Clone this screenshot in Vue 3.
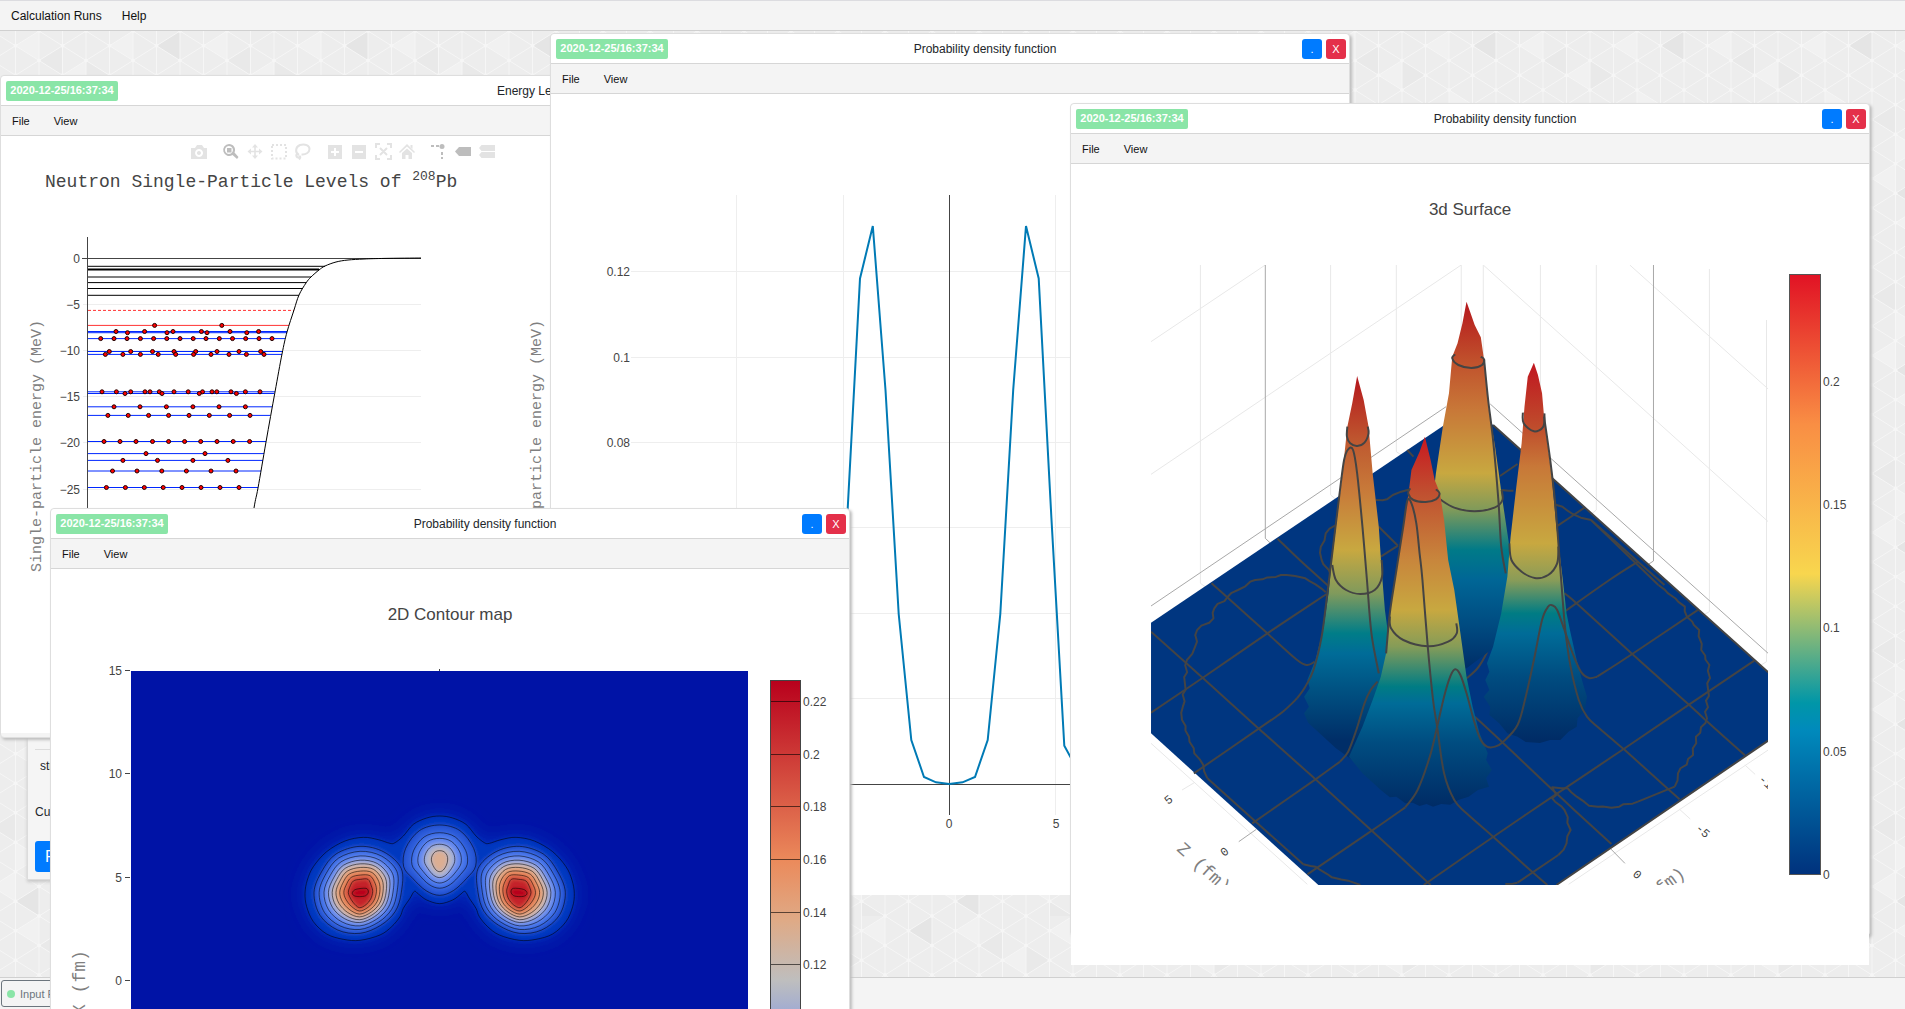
<script setup>
const stamp = '2020-12-25/16:37:34'

const windows = [
  { id: 'levels', title: 'Energy Levels', left: 0, top: 75, width: 1000, height: 663 },
  { id: 'line', title: 'Probability density function', left: 550, top: 33, width: 800, height: 833 },
  { id: 'contour', title: 'Probability density function', left: 50, top: 508, width: 800, height: 833 },
  { id: 'surface', title: 'Probability density function', left: 1070, top: 103, width: 800, height: 833 },
]

/* Catmull-Rom spline through a list of points */
function spline(pts, closed = false) {
  const n = pts.length
  const at = (i) => (closed ? pts[(i + n) % n] : pts[Math.max(0, Math.min(n - 1, i))])
  const f = (v) => v.toFixed(1)
  let d = `M${pts[0][0]} ${pts[0][1]}`
  for (let i = 0; i < (closed ? n : n - 1); i++) {
    const [a, b, c, e] = [at(i - 1), at(i), at(i + 1), at(i + 2)]
    d += `C${f(b[0] + (c[0] - a[0]) / 6)} ${f(b[1] + (c[1] - a[1]) / 6)} ${f(c[0] - (e[0] - b[0]) / 6)} ${f(c[1] - (e[1] - b[1]) / 6)} ${c[0]} ${c[1]}`
  }
  return closed ? d + 'Z' : d
}
const parse = (s) => s.trim().split(/\s+/).map((p) => p.split(',').map(Number))
const curve = (s, closed) => spline(parse(s), closed)

/* ---------- energy levels ---------- */
const energyTicks = [0, -5, -10, -15, -20, -25].map((v) => ({ y: Math.round(258 - v * 9.22) + 0.5, label: String(v).replace('-', '−') }))
const levels = [
  { y: 266.3, end: 325, kind: 'free', dots: [] },
  { y: 269.5, end: 319, kind: 'free thick', dots: [] },
  { y: 277, end: 311, kind: 'free', dots: [] },
  { y: 282.6, end: 306, kind: 'free', dots: [] },
  { y: 288.5, end: 303, kind: 'free', dots: [] },
  { y: 295.3, end: 299, kind: 'free', dots: [] },
  { y: 310.4, end: 294, kind: 'fermi', dots: [] },
  { y: 325.4, end: 289, kind: 'last', dots: [154.6, 221.8] },
  { y: 331.5, end: 287, kind: 'bound', dots: [116, 144.6, 173, 201.4, 230, 258.6] },
  { y: 332.7, end: 287, kind: 'bound', dots: [127.5, 167, 207, 246.8] },
  { y: 338.6, end: 285, kind: 'bound', dots: [100.7, 114, 127, 140.4, 153.6, 166.8, 180, 193.2, 206, 219.3, 232.5, 245.7, 259, 272] },
  { y: 351.5, end: 283, kind: 'bound', dots: [109.3, 130.7, 152.5, 174, 195.7, 217, 239, 260.7] },
  { y: 354.4, end: 282, kind: 'bound', dots: [105.4, 122.9, 140.4, 158.2, 175.7, 193.6, 211, 229, 246.4, 264] },
  { y: 391.8, end: 275, kind: 'bound', dots: [102, 116.4, 130.7, 145, 150, 159.3, 174, 188.2, 202.5, 212, 216.8, 231, 245.4, 260] },
  { y: 393.5, end: 274, kind: 'bound', dots: [125, 162, 199.3, 236.4] },
  { y: 406.8, end: 272, kind: 'bound', dots: [114, 140, 166.4, 192.9, 219, 245.4] },
  { y: 415.4, end: 270, kind: 'bound', dots: [107.9, 128.2, 148.6, 168.6, 189, 209.3, 229.6, 250] },
  { y: 441.5, end: 266, kind: 'bound', dots: [104, 120, 136, 152.5, 168.6, 184.6, 200.7, 217, 233.2, 249.6] },
  { y: 453.6, end: 264, kind: 'bound', dots: [146, 205] },
  { y: 460.4, end: 263, kind: 'bound', dots: [122.9, 157.5, 192.9, 227.9] },
  { y: 471, end: 261, kind: 'bound', dots: [112.5, 137, 161.8, 186.4, 211, 236] },
  { y: 487.5, end: 258, kind: 'bound', dots: [106.4, 125.4, 144.3, 163.2, 182, 201, 220, 239] },
]
const potential = curve('246,560 254,508 258,488 266,442 275,392 282,354 287,332 294,310 299,295 306,283 311,277 319,270 325,266 336,262 348,260 364,259 385,258.4 421,258')

/* ---------- line plot ---------- */
const lineRows = [
  { y: 271.5, label: '0.12' }, { y: 357.5, label: '0.1' }, { y: 442.5, label: '0.08' },
  { y: 527.5, label: '0.06' }, { y: 613.5, label: '0.04' }, { y: 698.5, label: '0.02' },
]
const linePoints = '834,746 847.2,518 860,278.5 872.8,226 885.5,390 898.7,614 911.3,740 924,777 936,782.3 949.3,784 962.5,782.3 975,777 987.7,740 1000.3,614 1013.2,390 1026,226 1038.7,278.5 1051.4,518 1064.3,745.7 1077,769 1090,780'

/* ---------- contour map, drawn in a space three times the plot size ---------- */
const mix = (a, b, t) => a.map((p, i) => [p[0] + (b[i][0] - p[0]) * t, p[1] + (b[i][1] - p[1]) * t])
const mirror = (pts) => pts.map(([x, y]) => [958 - x, y])
const lobeOuter = parse('364,337 346,394 302,436 240,460 173,450 120,406 102,337 126,273 168,222 240,199 312,216 364,266')
const lobeInner = parse('278,335 272,357 258,374 238,383 220,368 209,350 205,337 209,322 220,303 242,298 264,298 274,318')
const midOuter = parse('587,258 560,295 520,332 479,346 438,332 398,295 371,260 377,205 418,152 479,135 540,152 581,205')
const midInner = parse('503,240 499,256 490,270 479,275 468,270 459,256 454,240 457,226 466,215 479,212 492,215 501,226')
const core = parse('217,338 228,328 258,325 265,336 257,347 238,350 222,347')
const outerHalf = parse('479,108 440,114 400,133 370,168 345,188 330,190 295,179 250,172 195,183 140,215 100,260 82,300 75,340 80,380 100,425 140,462 190,478 240,481 300,465 335,440 360,410 370,385 390,355 403,334 415,342 440,360 479,371')
const outer = outerHalf.concat(mirror(outerHalf.slice(1, -1)).reverse())
const shades = ['#2a5ad8', '#4474ea', '#688cf0', '#9fadd8', '#d2b8a6', '#e3a27a', '#e6885a', '#d95c44', '#c4202c']
const rings = [{ d: spline(outer, true), fill: '#0038bf' }]
;[0, 0.15, 0.29, 0.42, 0.53, 0.64, 0.75, 0.87, 1].forEach((t, i) => {
  const l = mix(lobeOuter, lobeInner, t)
  rings.push({ d: spline(l, true), fill: shades[i] }, { d: spline(mirror(l), true), fill: shades[i] })
})
;[0, 0.3, 0.52, 0.75, 1].forEach((t, i) => rings.push({ d: spline(mix(midOuter, midInner, t), true), fill: i === 4 ? '#dcae92' : i === 3 ? '#b0b6cc' : shades[i] }))
rings.push({ d: spline(core, true), fill: '#b8001c' }, { d: spline(mirror(core), true), fill: '#b8001c' })

const contourTicks = [{ y: 670.5, label: '15' }, { y: 773.5, label: '10' }, { y: 877.5, label: '5' }, { y: 980.5, label: '0' }]
const barTicks = [{ y: 701.5, label: '0.22' }, { y: 754.5, label: '0.2' }, { y: 806.5, label: '0.18' }, { y: 859.5, label: '0.16' }, { y: 912.5, label: '0.14' }, { y: 964.5, label: '0.12' }]

/* ---------- 3d surface ---------- */
const surfaceTicks = [{ y: 381, label: '0.2' }, { y: 504, label: '0.15' }, { y: 627, label: '0.1' }, { y: 751, label: '0.05' }, { y: 874, label: '0' }]
const walls = 'M148 15V970L162 982M467 15V705L480 718M628 15V575L640 585M787 15V300M841 15V400M981 15V500M1118 15V750L1106 762M1395 27V1055L1383 1063M1535 180V1205L1522 1215M27 245L307 15M27 643L787 15M841 15L1539 785M1200 15L1539 387M27 1450L410 1873M1539 1470L1050 1873M133 1568L103 1590M1482 1515L1507 1543M1322 1648L1348 1677'
const wallsDark = 'M307 15V835L320 850M1258 15V903L1243 915M27 1038L750 440M858 432L1539 1180M285 1708L242 1745M1152 1765L1188 1810'

const floorLines = [
  '337,836 400,910 462,978', '175,970 215,1013 312,1120 385,1200 410,1215 428,1205',
  '27,1115 154,1254 291,1406 430,1558 568,1712 712,1875', '820,1370 887,1446 1020,1600 1155,1752',
  '27,1358 153,1254 312,1120 457,1002', '590,890 632,857', '585,800 632,857',
  '132,1540 291,1406 350,1355 385,1315', '275,1690 430,1558 490,1505',
  '410,1843 568,1712 650,1642', '695,1875 865,1731 1008,1612 1185,1467 1345,1334 1505,1202',
  '1185,1467 1282,1574 1322,1618', '1040,1000 1068,1028 1206,1182 1345,1334 1382,1376 1482,1486',
  '1105,780 1220,905 1285,975', '1120,1250 1206,1182 1368,1049', '1020,800 1090,742',
  '1040,1055 1150,960 1220,905', '882,648 925,612', '655,570 670,590',
  '800,1255 830,1220 860,1150 885,1060',
].map((s) => curve(s))
const jitter = (s) => {
  const p = parse(s)
  const out = []
  p.forEach((a, i) => {
    out.push(a)
    const b = p[i + 1]
    if (!b) return
    const steps = Math.max(1, Math.round(Math.hypot(b[0] - a[0], b[1] - a[1]) / 18))
    for (let k = 1; k < steps; k++) {
      const o = (k + i) % 2 ? 3 : -3
      out.push([a[0] + ((b[0] - a[0]) * k) / steps + o, a[1] + ((b[1] - a[1]) * k) / steps + o / 2])
    }
  })
  return 'M' + out.map((q) => q.join(' ')).join('L')
}
const rims = [
  '467,943 445,900 443,860 455,820 480,795',
  '455,997 430,973 405,955 380,948 345,945 300,958 270,965 240,990 215,1010 182,1045 180,1075 140,1110 135,1160 115,1200 110,1270 105,1340 103,1380 120,1430 133,1480 155,1515 165,1555',
  '400,1813 430,1820 470,1852 510,1862 540,1875', '578,720 605,718 640,695 662,688', '885,690 915,692',
  '1015,733 1035,740 1060,762 1080,773 1105,780', '1270,975 1335,1040 1340,1070 1370,1110 1375,1170 1395,1215 1392,1290 1385,1390 1362,1430 1355,1485 1318,1540 1310,1580',
  '1220,1625 1155,1643 1100,1637 1070,1610 1048,1585 1010,1582 1020,1605 1010,1615 1040,1650 1055,1710 1045,1750 1025,1785', '895,1872 925,1868',
].map(jitter)
const straightRims = 'M165 1555L400 1813M1105 780L1270 975M1310 1580L1220 1625M925 1868L1025 1785M865 495L1539 1237M1539 1442L1020 1875'

const peaks = [
  {
    id: 'back',
    body: 'M800 125L810 160L820 195L835 232L843 300L855 450L870 560L888 720L905 860L910 1000L895 1100L860 1170L800 1225L680 1240L700 900L725 640L742 500L757 400L765 290L778 250L790 190Z',
    stops: [[125, '#b5161c'], [300, '#c0502c'], [450, '#c87838'], [640, '#c8a840'], [750, '#7f9a5a'], [870, '#007a88'], [960, '#006696'], [1100, '#004a80'], [1225, '#002e68']],
    lines: ['772,283 765,295 780,315 812,324 838,315 843,298 835,290', '735,718 770,743 820,754 870,742 888,720 886,690', '843,298 853,420 865,540 878,720 885,860 896,940'],
  },
  {
    id: 'right',
    body: 'M965 308L950 350L942 440L935 550L922 680L908 830L900 950L885 1060L865 1160L850 1210L856 1235L846 1260L856 1290L842 1310L858 1340L856 1365L880 1390L900 1420L925 1430L945 1446L980 1449L1005 1440L1030 1440L1050 1415L1070 1400L1072 1375L1090 1350L1095 1310L1085 1270L1070 1200L1055 1120L1045 1060L1035 950L1020 800L1008 640L990 470L985 400L975 345Z',
    stops: [[308, '#c01620'], [500, '#bf4c2c'], [620, '#c87838'], [850, '#c8a840'], [960, '#8a9c58'], [1060, '#007c84'], [1120, '#006c98'], [1250, '#004c80'], [1440, '#002c66']],
    lines: ['938,458 940,490 965,514 988,500 991,460', '905,850 910,900 935,935 967,954 1000,945 1022,910 1025,860', '990,470 1005,600 1018,740 1030,930 1042,1110 1055,1220 1075,1320 1095,1370 1125,1405 1185,1467'],
  },
  {
    id: 'left',
    body: 'M532 348L520 430L508 500L495 650L480 800L470 900L462 1000L450 1100L430 1200L410 1260L416 1285L402 1310L414 1340L402 1360L412 1388L440 1420L480 1465L520 1500L640 1500L612 1160L600 1050L592 930L585 800L570 640L560 500L548 420Z',
    stops: [[348, '#b5161c'], [550, '#bf5a30'], [700, '#c87c3a'], [870, '#c8a840'], [1000, '#809a5c'], [1120, '#007d88'], [1180, '#006c98'], [1300, '#004f80'], [1440, '#002e68']],
    lines: ['508,500 507,530 515,550 532,558 550,548 560,520 558,500', '471,915 480,960 505,990 540,1002 575,990 593,950 592,900', '385,1315 405,1280 425,1230 445,1130 460,990 475,840 490,690 500,600 510,568 522,570 532,640 545,800 556,960 567,1120 585,1240'],
  },
  {
    id: 'front',
    body: 'M698 530L685 575L665 630L658 700L645 800L627 940L612 1060L603 1180L590 1250L570 1320L545 1400L512 1490L545 1540L590 1590L612 1612L628 1610L650 1630L668 1628L685 1638L702 1632L718 1640L738 1632L760 1634L780 1620L805 1610L828 1590L855 1580L848 1555L862 1530L848 1500L852 1480L832 1420L815 1340L800 1250L785 1120L770 990L755 900L745 780L735 700L722 660L712 600Z',
    stops: [[530, '#c81820'], [700, '#c05030'], [900, '#c8863c'], [1050, '#c8a840'], [1160, '#859c58'], [1280, '#007c84'], [1330, '#006c98'], [1450, '#004c80'], [1635, '#002c66']],
    lines: ['662,685 657,700 670,720 700,726 725,718 734,700 725,688', '612,1070 615,1105 645,1140 706,1159 755,1145 776,1120 775,1090', '603,1180 612,1060 627,940 645,800 655,722 665,730 677,790 685,880 692,960 705,1160 718,1320 728,1400 745,1540 770,1620 800,1660 865,1730 962,1837 998,1875', '490,1505 510,1475 530,1410 550,1330 565,1290 582,1265', '650,1642 680,1590 710,1490 728,1400 745,1310 760,1250 772,1228 785,1245 800,1300 820,1390 835,1440 850,1460 870,1460 890,1445 925,1395 945,1310 965,1200 985,1080 1000,1040 1010,1036 1022,1050 1040,1110 1060,1180 1080,1235 1100,1254 1120,1250'],
  },
].map((p) => ({ ...p, lines: p.lines.map((s) => curve(s)) }))

/* ---------- wallpaper ---------- */
const wallpaperLines = (() => {
  let d = ''
  for (let c = 0; c <= 8; c++) {
    const x = c * 23.5
    d += `M${x} 0V177`
    for (let r = -1; r <= 6; r++) {
      const y = r * 29.5 + (c % 2 ? 14.75 : 0)
      if (c < 8) d += `M${x} ${y}l23.5 14.75M${x} ${y}l23.5 -14.75`
    }
  }
  return d
})()
const wallpaperNodes = []
for (let c = 0; c <= 8; c++) for (let r = 0; r <= 6; r++) wallpaperNodes.push([c * 23.5, r * 29.5 + (c % 2 ? 14.75 : 0)])
</script>

<template>
  <div class="app">
    <nav class="menubar">
      <button type="button">Calculation Runs</button>
      <button type="button">Help</button>
    </nav>

    <main class="desktop">
      <svg class="wallpaper" aria-hidden="true">
        <defs>
          <pattern id="tri" width="188" height="177" patternUnits="userSpaceOnUse" x="-8" y="0">
            <rect width="188" height="177" fill="#ededed" />
            <path fill="#e5e5e5" d="M164.5 14.75L188 0V29.500ZM141 118L164.500 103.250V132.750ZM94 88.500L70.500 73.750V103.250ZM23.500 162.250L47 147.500V177Z" />
            <path fill="#e9e9e9" d="M0 88.500L23.500 73.750V103.250ZM47 29.500L70.500 14.750V44.250ZM117.500 44.250L94 29.500V59ZM141 177L117.500 162.250V191.750Z" />
            <path fill="#f1f1f1" d="M23.500 14.750L47 0V29.500ZM70.500 44.250L94 29.500V59ZM117.500 14.750L141 29.500V0ZM164.500 73.750L141 59V88.500ZM47 118L23.500 103.250V132.750ZM94 147.500L117.500 132.750V162.250ZM0 147.500L23.500 132.750V162.250Z" />
            <path :d="wallpaperLines" fill="none" stroke="#f6f6f6" />
            <circle v-for="(p, i) in wallpaperNodes" :key="i" :cx="p[0]" :cy="p[1]" r="2" fill="#f6f6f6" />
          </pattern>
        </defs>
        <rect width="100%" height="100%" fill="url(#tri)" />
      </svg>
      <section class="run-panel">
        <hr />
        <p class="indent">structure</p>
        <p>Current</p>
        <button type="button" class="run">Run</button>
      </section>
    </main>

    <footer class="taskbar">
      <button type="button" class="task"><span class="dot"></span>Input File</button>
    </footer>

    <article
      v-for="w in windows"
      :key="w.id"
      class="window"
      :class="w.id"
      :style="{ left: w.left + 'px', top: w.top + 'px', width: w.width + 'px', height: w.height + 'px' }"
    >
      <header class="titlebar">
        <span class="badge">{{ stamp }}</span>
        <h2>{{ w.title }}</h2>
        <button type="button" class="min" aria-label="Minimize">.</button>
        <button type="button" class="close" aria-label="Close">X</button>
      </header>
      <nav class="window-menu">
        <button type="button">File</button>
        <button type="button">View</button>
      </nav>

      <div class="content">
        <svg v-if="w.id === 'levels'" class="plot" width="998" height="597" viewBox="1 136 998 597">
          <g class="modebar">
            <path fill-rule="evenodd" d="M191 148h4l2-3h5l2 3h3v11h-16zM199 149a4 4 0 1 0 .1 0zM199 151a2 2 0 1 1-.1 0z" />
            <g class="on">
              <path fill-rule="evenodd" d="M229 144a6 6 0 1 0 3.500 11l4.500 4 1.500-2-4-4.500a6 6 0 0 0-5.500-8.500zM229 146a4 4 0 1 1-.1 0z" />
              <path d="M227 148h4.500v4.500h-4.500z" />
            </g>
            <path d="M255 144l3 3.500h-2.200v3.200h3.200v-2.200l3.500 3-3.500 3v-2.200h-3.200v3.200h2.200l-3 3.500-3-3.500h2.200v-3.200h-3.200v2.200l-3.500-3 3.500-3v2.200h3.200v-3.200h-2.200z" />
            <path d="M272 145h14v13.500h-14z" fill="none" stroke="#e3e3e3" stroke-width="2" stroke-dasharray="2 2" />
            <path d="M299 155c-4-2-4-8 1-10 5-1.500 9.500.5 9.500 4s-4 6-8 5.500M298 153.500a2 2 0 1 0 2 3q1 1-1 3" fill="none" stroke="#e3e3e3" stroke-width="2" />
            <path fill-rule="evenodd" d="M328 145h14v14h-14zM334 148v3h-3v2h3v3h2v-3h3v-2h-3v-3z" />
            <path fill-rule="evenodd" d="M352 145h14v14h-14zM355 151v2h8v-2z" />
            <path d="M376 148v-4h4M387 144h4v4M391 155v4h-4M380 159h-4v-4M380 148l7 7M387 148l-7 7" fill="none" stroke="#e3e3e3" stroke-width="2" />
            <path d="M407 144l8 8-1 1-7-6.500-7 6.500-1-1zM402 153l5-4.500 5 4.500v6h-3.500v-4h-3v4h-3.500zM410.500 145h2v4l-2-2z" />
            <g class="on">
              <path d="M431 145h3v2h-3zM436 145h3v2h-3zM441 152h2v3h-2zM441 157h2v2h-2z" />
              <circle cx="442" cy="146.500" r="2.500" />
              <path d="M455 151.500l4-4.500h12v9h-12z" />
            </g>
            <path d="M479 148l2.500-3h13.500v6h-13.500zM479 155l2.500-3h13.500v6h-13.500z" />
          </g>
          <text class="mono title" x="45" y="187">Neutron Single-Particle Levels of <tspan class="sup" dy="-7">208</tspan><tspan dy="7">Pb</tspan></text>
          <path v-for="t in energyTicks.slice(1)" :key="t.y" class="grid" :d="`M83 ${t.y}H421`" />
          <text v-for="t in energyTicks" :key="t.label" class="tick end" x="80" :y="t.y + 4">{{ t.label }}</text>
          <path class="axis" d="M87.500 237V560M82 258.500H421" />
          <g v-for="(l, i) in levels" :key="i">
            <path class="level" :class="l.kind" :d="`M88 ${l.y}H${l.end}`" />
          </g>
          <path :d="potential" fill="none" stroke="#000" />
          <g v-for="(l, i) in levels" :key="'d' + i">
            <circle v-for="x in l.dots" :key="x" :cx="x" :cy="l.y" r="2" fill="#f00" stroke="#200" />
          </g>
          <text class="mono axis-title" transform="translate(41 572) rotate(-90)">Single-particle energy (MeV)</text>
          <text class="mono axis-title" transform="translate(541 572) rotate(-90)">Single-particle energy (MeV)</text>
        </svg>

        <svg v-else-if="w.id === 'line'" class="plot" width="798" height="801" viewBox="551 94 798 801">
          <path class="grid" d="M736.500 195V815M843.500 195V815M1055.500 195V815" />
          <g v-for="r in lineRows" :key="r.label">
            <path class="grid" :d="`M631 ${r.y}H1250`" />
            <text class="tick end" x="630" :y="r.y + 4">{{ r.label }}</text>
          </g>
          <path class="axis" d="M949.500 195V815M631 784.500H1250" />
          <polyline :points="linePoints" fill="none" stroke="#007ab5" stroke-width="2" stroke-linejoin="miter" />
          <text class="tick mid" x="949" y="828">0</text>
          <text class="tick mid" x="1056" y="828">5</text>
        </svg>

        <svg v-else-if="w.id === 'contour'" class="plot" width="798" height="800" viewBox="51 569 798 800">
          <defs>
            <linearGradient id="heat" gradientUnits="userSpaceOnUse" x1="0" x2="0" y1="680" y2="1281">
              <stop offset="0" stop-color="#b8001c" />
              <stop offset=".3" stop-color="#eb8a5b" />
              <stop offset=".4" stop-color="#dfaa86" />
              <stop offset=".5" stop-color="#bebebe" />
              <stop offset=".65" stop-color="#6a89f7" />
              <stop offset="1" stop-color="#0013a6" />
            </linearGradient>
            <filter id="glow" x="-30%" y="-50%" width="160%" height="200%"><feGaussianBlur stdDeviation="28" /></filter>
            <filter id="soft"><feGaussianBlur stdDeviation="6" /></filter>
          </defs>
          <text class="title mid" x="450" y="620">2D Contour map</text>
          <rect x="131" y="671" width="617" height="617" fill="#0013a6" />
          <path d="M439.500 669V671" stroke="#444" />
          <g transform="translate(280 780) scale(.333333)">
            <path :d="rings[0].d" fill="#0030bd" filter="url(#glow)" />
            <g filter="url(#soft)"><path v-for="(r, i) in rings" :key="i" :d="r.d" :fill="r.fill" /></g>
            <path v-for="(r, i) in rings" :key="'s' + i" :d="r.d" fill="none" stroke="#000" stroke-opacity=".65" stroke-width="2.500" />
          </g>
          <g v-for="t in contourTicks" :key="t.label">
            <path class="axis" :d="`M125 ${t.y}h5`" />
            <text class="tick end" x="122" :y="t.y + 4">{{ t.label }}</text>
          </g>
          <text class="mono axis-title big" transform="translate(85 1015) rotate(-90)">X (fm)</text>
          <rect x="770.500" y="680.500" width="30" height="600" fill="url(#heat)" stroke="#444" />
          <g v-for="t in barTicks" :key="t.label">
            <path :d="`M771 ${t.y}h29`" stroke="#000" stroke-opacity=".6" />
            <text class="tick" x="803" :y="t.y + 4">{{ t.label }}</text>
          </g>
        </svg>

        <svg v-else class="plot" width="798" height="801" viewBox="1071 164 798 801">
          <defs>
            <linearGradient id="portland" gradientUnits="userSpaceOnUse" x1="0" x2="0" y1="274" y2="874">
              <stop offset="0" stop-color="#e11224" />
              <stop offset=".25" stop-color="#f98e44" />
              <stop offset=".5" stop-color="#f8d64e" />
              <stop offset=".715" stop-color="#0096a8" />
              <stop offset=".76" stop-color="#008abc" />
              <stop offset="1" stop-color="#00327d" />
            </linearGradient>
            <linearGradient v-for="p in peaks" :id="'peak-' + p.id" :key="p.id" gradientUnits="userSpaceOnUse" x1="0" x2="0" :y1="p.stops[0][0]" :y2="p.stops[8][0]">
              <stop v-for="s in p.stops" :key="s[0]" :offset="(s[0] - p.stops[0][0]) / (p.stops[8][0] - p.stops[0][0])" :stop-color="s[1]" />
            </linearGradient>
            <clipPath id="scene"><rect x="1151" y="265" width="617" height="620" /></clipPath>
          </defs>
          <text class="title mid" x="1470" y="215">3d Surface</text>
          <g clip-path="url(#scene)">
            <g class="scene" transform="translate(1140 260) scale(.408163 .333333)">
              <path :d="walls" stroke="#e8e8e8" />
              <path :d="wallsDark" stroke="#a8a8a8" />
              <path d="M814 439L1539 1237V1442L1020 1875H437L27 1420V1088Z" class="floor" />
              <path v-for="(d, i) in floorLines" :key="'f' + i" :d="d" class="mesh" />
              <path v-for="(d, i) in rims" :key="'r' + i" :d="d" class="mesh" />
              <path :d="straightRims" class="mesh" />
              <g v-for="p in peaks" :key="p.id">
                <path :d="p.body" :style="{ fill: `url(#peak-${p.id})` }" />
                <path v-for="(d, i) in p.lines" :key="i" :d="d" class="mesh" />
              </g>
            </g>
            <g class="mono scene-text">
              <text transform="translate(1168 805) rotate(-38)">5</text>
              <text transform="translate(1224 857) rotate(-38)">0</text>
              <text transform="translate(1695 829) rotate(42)">-5</text>
              <text transform="translate(1632 875) rotate(42)">0</text>
              <text transform="translate(1758 780) rotate(42)">-1</text>
              <text class="axis-title big" transform="translate(1176 850) rotate(42)">Z (fm)</text>
              <text class="axis-title big" transform="translate(1634 914) rotate(-36)">X (fm)</text>
            </g>
          </g>
          <rect x="1789.500" y="274.500" width="31" height="600" fill="url(#portland)" stroke="#555" />
          <text v-for="t in surfaceTicks" :key="t.label" class="tick" x="1823" :y="t.y + 5">{{ t.label }}</text>
        </svg>
      </div>
    </article>
  </div>
</template>

<style>
body {
  margin: 0;
  overflow: hidden;
}
</style>

<style scoped>
.app {
  position: relative;
  display: flex;
  flex-direction: column;
  height: 100vh;
  overflow: hidden;
  font-family: "Liberation Sans", Arial, sans-serif;
  font-size: 12px;
  color: #212529;
}
button {
  border: 0;
  background: none;
  margin: 0;
  padding: 0;
  font: inherit;
  color: inherit;
}
.menubar {
  display: flex;
  box-sizing: border-box;
  height: 31px;
  padding-left: 11px;
  gap: 20px;
  border-top: 1px solid #dcdce0;
  border-bottom: 1px solid #d0d0d0;
  background: #f4f4f4;
  color: #111;
}
.desktop {
  position: relative;
  flex: 1;
  overflow: hidden;
  display: flex;
  align-items: flex-end;
}
.wallpaper {
  position: absolute;
  inset: 0;
  width: 100%;
  height: 100%;
}
.run-panel {
  position: relative;
  box-sizing: border-box;
  width: 300px;
  height: 180px;
  margin: 0 0 97px 27px;
  padding: 41px 7px 8px;
  background: #f5f5f5;
  border: 1px solid #dcdcdc;
  border-top: 0;
  box-shadow: 0 2px 3px #c8c8c8;
}
.run-panel hr {
  margin: 8px 0;
  border: 0;
  border-top: 1px solid #dcdcdc;
}
.run-panel p {
  margin: 0 0 21px;
  line-height: 16px;
}
.run-panel .indent {
  margin-bottom: 30px;
  padding-left: 5px;
}
.run {
  padding: 0 10px;
  height: 31px;
  border-radius: 3px;
  background: #007bff;
  color: #fff;
  font-size: 16px;
}
.taskbar {
  display: flex;
  box-sizing: border-box;
  height: 32px;
  padding: 2px 1px;
  border-top: 1px solid #d0d0d0;
  background: #f4f4f4;
}
.task {
  display: flex;
  align-items: center;
  gap: 5px;
  box-sizing: border-box;
  height: 27px;
  padding: 0 8px 0 5px;
  border: 1px solid #6c757d;
  border-radius: 3px;
  color: #6c757d;
  font-size: 11px;
}
.dot {
  width: 8px;
  height: 8px;
  border-radius: 50%;
  background: #8ae5a7;
}
.window {
  position: absolute;
  display: flex;
  flex-direction: column;
  box-sizing: border-box;
  border: 1px solid #dedede;
  border-radius: 4px;
  background: #f4f4f4;
  box-shadow: 2px 2px 3px #bdbdbd;
}
.titlebar {
  display: flex;
  align-items: center;
  box-sizing: border-box;
  flex: none;
  height: 30px;
  padding: 0 3px 0 5px;
  gap: 4px;
  border-bottom: 1px solid #d6d6d6;
  border-radius: 4px 4px 0 0;
  background: #fff;
}
.titlebar h2 {
  flex: 1;
  margin: 0;
  font-size: 12px;
  font-weight: 400;
  text-align: center;
}
.badge {
  box-sizing: border-box;
  width: 112px;
  height: 20px;
  border-radius: 2px;
  background: #8ae5a7;
  color: #fff;
  font-size: 11px;
  font-weight: 700;
  line-height: 18px;
  text-align: center;
}
.min,
.close {
  width: 20px;
  height: 20px;
  border-radius: 3px;
  background: #007bff;
  color: #fff;
  font-size: 11px;
  line-height: 20px;
}
.close {
  background: #e4304a;
}
.window-menu {
  display: flex;
  flex: none;
  box-sizing: border-box;
  height: 30px;
  padding-left: 11px;
  gap: 24px;
  border-bottom: 1px solid #d6d6d6;
  background: #f4f4f4;
  color: #111;
  font-size: 11px;
}
.content {
  background: #fff;
}
.plot {
  display: block;
  background: #fff;
}
.grid {
  stroke: #eee;
}
.axis {
  stroke: #444;
  fill: none;
}
.tick {
  font-size: 12px;
  fill: #444;
}
.end {
  text-anchor: end;
}
.mid {
  text-anchor: middle;
}
.title {
  font-size: 17px;
  fill: #444;
}
.mono {
  font-family: "Liberation Mono", "Courier New", monospace;
}
.mono.title {
  font-size: 18px;
  white-space: pre;
}
.sup {
  font-size: 13px;
}
.axis-title {
  font-size: 15px;
  fill: #7f7f7f;
}
.axis-title.big {
  font-size: 18px;
}
.modebar {
  fill: #e3e3e3;
}
.modebar .on {
  fill: #bdbdbd;
}
.level {
  fill: none;
}
.free {
  stroke: #000;
}
.free.thick {
  stroke-width: 2;
}
.fermi {
  stroke: #f33;
  stroke-dasharray: 3 2;
}
.last {
  stroke: #f33;
}
.bound {
  stroke: #0027ff;
}
.scene path {
  fill: none;
  vector-effect: non-scaling-stroke;
}
.scene .floor {
  fill: #003680;
}
.scene .mesh {
  stroke: #444;
  stroke-width: 2;
  stroke-linejoin: round;
}
.scene-text {
  font-size: 12px;
  fill: #444;
}
</style>
